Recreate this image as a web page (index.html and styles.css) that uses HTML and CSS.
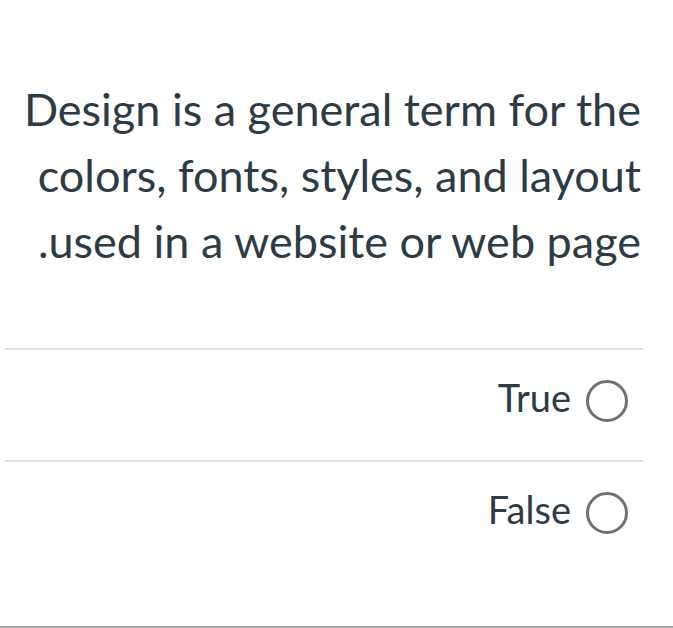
FILE: index.html
```html
<!DOCTYPE html>
<html lang="en" dir="rtl">
<head>
<meta charset="utf-8">
<link rel="stylesheet" href="styles.css">
</head>
<body>
<div class="page">
  <div class="quiz">
    <div class="question">Design is a general term for the colors, fonts, styles, and layout used in a website or web page.</div>
    <div class="answers">
      <label class="answer"><span class="radio"></span><span class="label">True</span></label>
      <label class="answer"><span class="radio"></span><span class="label">False</span></label>
    </div>
  </div>
</div>
</body>
</html>
```
FILE: styles.css
```css
html, body {
  margin: 0;
  padding: 0;
  background: #ffffff;
}
.page {
  height: 626px;
  border-bottom: 2px solid #a8a8a8;
  font-family: Lato, "Noto Sans", sans-serif;
  color: #2d3b45;
}
.quiz {
  padding: 0 30px 0 5px;
}
.question {
  direction: rtl;
  font-size: 45px;
  line-height: 66px;
  padding: 76px 2px 0 0;
  height: 348px;
  box-sizing: border-box;
}
.answers {
  display: flex;
  flex-direction: column;
}
.answer {
  display: flex;
  align-items: flex-start;
  gap: 15px;
  height: 110px;
  border-top: 2px solid #e0e0e0;
  padding-right: 15px;
}
.radio {
  width: 36px;
  height: 36px;
  border: 3px solid #707070;
  border-radius: 50%;
  margin-top: 30px;
}
.label {
  font-size: 38px;
  line-height: 48px;
  margin-top: 23px;
}
```
